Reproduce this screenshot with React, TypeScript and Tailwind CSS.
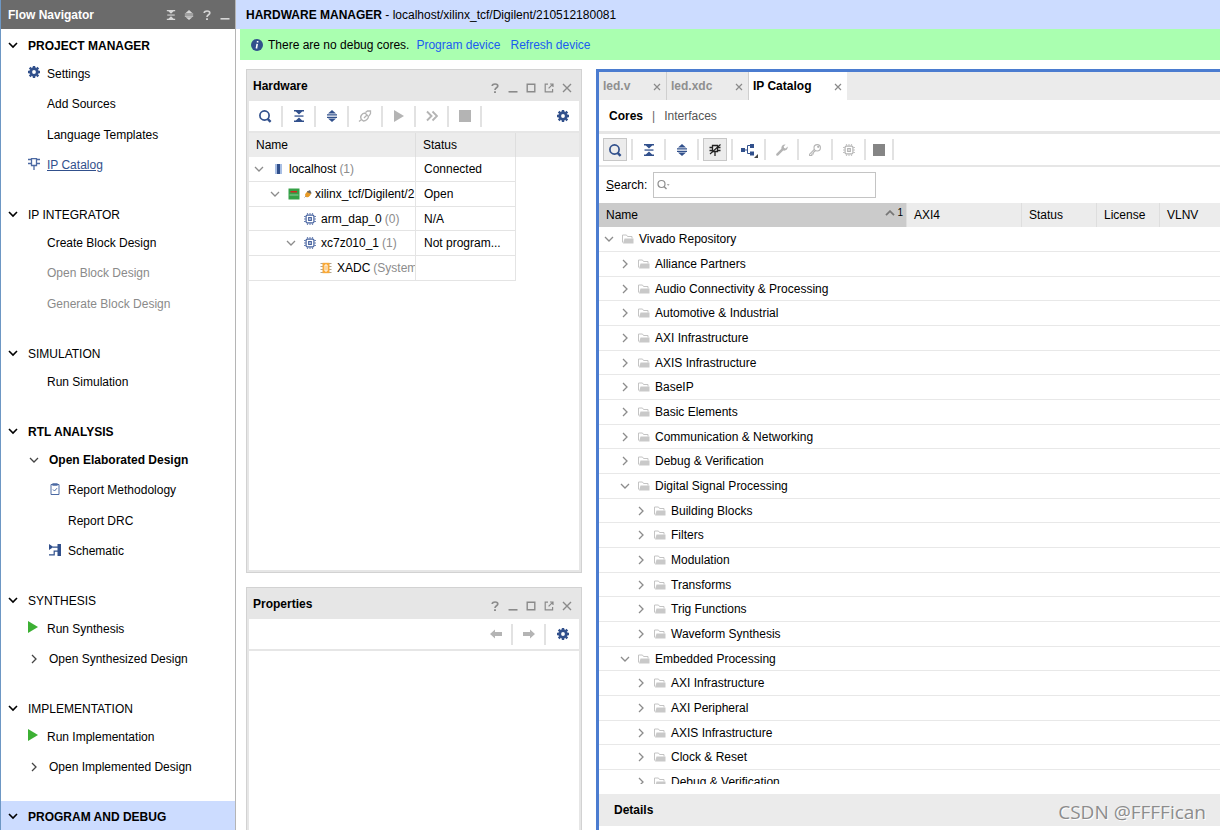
import React, { useState } from 'react';

type NodeIcon = 'folder' | 'server' | 'board' | 'chip' | 'xadc';

interface TreeNode {
  name: string;
  depth: number;
  open?: boolean;
  icon: NodeIcon;
  note?: string;
  status?: string;
}

interface NavItem {
  label: string;
  icon?: React.ReactNode;
  level?: 1 | 2;
  open?: boolean;
  bold?: boolean;
  disabled?: boolean;
  link?: boolean;
}

interface NavSection {
  title: string;
  bold?: boolean;
  active?: boolean;
  items: NavItem[];
}

/* ---------- icons ---------- */

const ChevronDown = ({ className = 'stroke-[1.3]' }: { className?: string }) => (
  <svg viewBox="0 0 10 10" className={`h-[10px] w-[10px] shrink-0 ${className}`} fill="none" stroke="currentColor">
    <path d="M1 3l4 4 4-4" />
  </svg>
);

const ChevronRight = () => (
  <svg viewBox="0 0 10 10" className="h-[10px] w-[10px] shrink-0 stroke-[1.3]" fill="none" stroke="currentColor">
    <path d="M3 1l4 4-4 4" />
  </svg>
);

const GearIcon = () => (
  <svg viewBox="0 0 12 12" className="h-3 w-3 shrink-0" fill="none" stroke="#31508c">
    <circle cx="6" cy="6" r="3.3" strokeWidth="2.8" />
    <path
      d="M6 0v2M6 10v2M0 6h2M10 6h2M1.7 1.7l1.4 1.4M8.9 8.9l1.4 1.4M10.3 1.7L8.9 3.1M3.1 8.9l-1.4 1.4"
      strokeWidth="2.4"
    />
  </svg>
);

const SearchIcon = () => (
  <svg viewBox="0 0 14 14" className="h-[14px] w-[14px]" fill="none" stroke="#31508c">
    <circle cx="6.5" cy="6.5" r="4.6" strokeWidth="1.7" />
    <path d="M9.6 9.8l3 3" strokeWidth="2.4" />
  </svg>
);

const CollapseIcon = ({ small = false }: { small?: boolean }) => (
  <svg viewBox="0 0 12 12" className={small ? 'h-[10px] w-[10px]' : 'h-3 w-3'} fill="currentColor">
    <path d="M1 0h10v1.4H9.200L6 4.400 2.800 1.400H1z" />
    <path d="M1.500 5.400h9v1.300h-9z" />
    <path d="M6 7.600l3.200 2.800H11V12H1v-1.600h1.800z" />
  </svg>
);

const ExpandIcon = ({ small = false }: { small?: boolean }) => (
  <svg viewBox="0 0 12 12" className={small ? 'h-[10px] w-[10px]' : 'h-3 w-3'} fill="currentColor">
    <path d="M6 0l4 3.600H2z" />
    <path d="M1 4.200h10v1.300H1zM1 6.700h10V8H1z" />
    <path d="M2 8.600h8L6 12z" />
  </svg>
);

const HelpIcon = () => (
  <svg viewBox="0 0 10 10" className="h-[10px] w-[10px]" fill="none" stroke="currentColor">
    <path d="M2.200 3C2.200.3 7.800.3 7.800 3 7.800 4.800 5 4.800 5 7" strokeWidth="1.7" />
    <path d="M5 8.2V10" strokeWidth="1.9" />
  </svg>
);

const MinimizeIcon = () => (
  <svg viewBox="0 0 10 10" className="h-[10px] w-[10px]" fill="currentColor">
    <path d="M.5 8h9v1.6h-9z" />
  </svg>
);

const MaximizeIcon = () => (
  <svg viewBox="0 0 10 10" className="h-[10px] w-[10px]" fill="none" stroke="currentColor">
    <path d="M1.2 1.2h7.6v7.6H1.2z" strokeWidth="1.4" />
  </svg>
);

const FloatIcon = () => (
  <svg viewBox="0 0 10 10" className="h-[10px] w-[10px]" fill="none" stroke="currentColor">
    <path d="M4 1.2H1.2v7.6h7.4V6M4.6 5.4l4-4M6 1h3v3" strokeWidth="1.2" />
  </svg>
);

const CloseIcon = () => (
  <svg viewBox="0 0 10 10" className="h-[10px] w-[10px]" fill="none" stroke="currentColor">
    <path d="M1 1l8 8M9 1L1 9" strokeWidth="1.4" />
  </svg>
);

const PlugIcon = () => (
  <svg viewBox="0 0 14 14" className="h-[14px] w-[14px]" fill="none" stroke="#b4b4b4" strokeWidth="1.3">
    <path d="M1 12.500l2.500-2M3.500 10.500c-1.500-2-.5-4.500 1.500-6l2-.5 3.500 3.500c0 2-2.500 4.500-5 4.500z" />
    <path d="M7.500 3.500L9.500 2h3v2.500L11 7M6 9l3-3" />
  </svg>
);

const PlayIcon = ({ className }: { className: string }) => (
  <svg viewBox="0 0 10 12" className={className} fill="currentColor">
    <path d="M0 0l10 6-10 6z" />
  </svg>
);

const FastIcon = () => (
  <svg viewBox="0 0 12 12" className="h-3 w-3" fill="none" stroke="#b4b4b4" strokeWidth="1.9">
    <path d="M1 1.500L5.500 6 1 10.500M6.500 1.500L11 6 6.500 10.500" />
  </svg>
);

const ArrowIcon = ({ flip = false }: { flip?: boolean }) => (
  <svg viewBox="0 0 12 10" className={`h-[10px] w-3 ${flip ? 'rotate-180' : ''}`} fill="#b4b4b4">
    <path d="M0 5l5-4.500v2.500h7v4H5v2.500z" />
  </svg>
);

const CatalogIcon = () => (
  <svg viewBox="0 0 12 12" className="h-3 w-3 shrink-0" fill="none" stroke="#4c6aa3">
    <path d="M3.500.500h5v7h-5zM0 1.500h3.500M0 5.500h3.500M8.500 1.500H12M8.500 5.500H12M6 7.500V12" strokeWidth="1.3" />
  </svg>
);

const ReportIcon = () => (
  <svg viewBox="0 0 12 12" className="h-3 w-3 shrink-0" fill="none" stroke="#4c6aa3">
    <path d="M2 1.500h8v10H2z" />
    <path d="M4 .8h4v1.400H4z" strokeWidth="1.200" />
    <path d="M4 6.500L5.500 8 8 5.200" />
  </svg>
);

const SchematicIcon = () => (
  <svg viewBox="0 0 12 12" className="h-3 w-3 shrink-0" fill="#31508c">
    <path d="M0 0l4.500 3L0 6zM4 2.500h5v1.200H4zM8.500 0H12v12H8.500zM4.600 6.500h4v1.200H5.800v3.800H0v-1.200h4.600z" />
  </svg>
);

const FilterIcon = () => (
  <svg viewBox="0 0 14 14" className="h-[14px] w-[14px]" fill="none" stroke="#222">
    <path d="M4.500 2.500h5v6h-5zM1.500 4.500h3M1.500 7.500h3M9.500 4.500h3M9.500 7.500h3M7 8.500V13" strokeWidth="1.3" />
    <path d="M2 11L12.500 1.500" strokeWidth="1.1" />
  </svg>
);

const HierarchyIcon = () => (
  <svg viewBox="0 0 18 16" className="h-4 w-[18px]" fill="#31508c">
    <path d="M1 6h4v4H1zM10 2h4v4h-4zM10 9.500h4v4h-4z" />
    <path d="M5 8h2M10 3.500H7.500v8H10" fill="none" stroke="#31508c" />
    <path d="M18 12v4h-4z" fill="#444" />
  </svg>
);

const WrenchIcon = () => (
  <svg viewBox="0 0 12 12" className="h-3 w-3" fill="#b4b4b4">
    <path d="M.4 9.800l5-5C4.900 2.300 7 0 9.600.5L7.700 2.400l.4 1.600 1.600.4 1.900-1.900C12.300 5.200 9.600 7.300 7.200 6.600l-5 5c-1.200.9-2.700-.6-1.800-1.800z" />
  </svg>
);

const KeyIcon = () => (
  <svg viewBox="0 0 12 12" className="h-3 w-3" fill="none" stroke="#b4b4b4" strokeWidth="1.100">
    <circle cx="8.200" cy="3.800" r="3.200" />
    <circle cx="9.200" cy="2.800" r=".6" />
    <path d="M5.600 5.200L.6 10.200v1.300h2.200V10h1.400V8.500l2.200-1.800" />
  </svg>
);

const ChipIcon = ({ color = '#4763a0' }: { color?: string }) => (
  <svg viewBox="0 0 12 12" className="h-3 w-3 shrink-0" fill="none" stroke={color}>
    <rect x="2.100" y="2.100" width="7.800" height="7.800" rx="1.200" strokeWidth="1.200" />
    <path d="M4.700 4.700h2.600v2.600H4.700z" strokeWidth="1.200" />
    <path d="M3.500 .2v1.400M6 .2v1.400M8.500 .2v1.400M3.500 10.400v1.400M6 10.400v1.400M8.500 10.400v1.400M.2 3.500h1.400M.2 6h1.400M.2 8.500h1.400M10.400 3.500h1.400M10.400 6h1.400M10.400 8.500h1.400" strokeWidth="1.200" />
  </svg>
);

const StopIcon = ({ dark = false }: { dark?: boolean }) => (
  <svg viewBox="0 0 12 12" className="h-3 w-3" fill={dark ? '#858585' : '#b4b4b4'}>
    <path d="M0 0h12v12H0z" />
  </svg>
);

const FolderIcon = () => (
  <svg viewBox="0 0 12 12" className="h-3 w-3 shrink-0">
    <path d="M.500 9.500V2h4l1 1.500h4.500V5.500" fill="none" stroke="#c4c4c4" />
    <path d="M2.500 5.500h9v5H1z" fill="#c9c9c9" />
  </svg>
);

const ServerIcon = () => (
  <svg viewBox="0 0 12 12" className="h-3 w-3 shrink-0">
    <path d="M3 1h7v10H3z" fill="#a9bfe4" />
    <path d="M5 1h3v10H5z" fill="#31508c" />
  </svg>
);

const BoardIcon = () => (
  <svg viewBox="0 0 12 12" className="h-3 w-3 shrink-0">
    <path d="M.500.500H11.500v11H.500z" fill="#35a046" />
    <path d="M2.500 3h6.500v1.500H2.500z" fill="#d0281f" />
    <path d="M1.500 6.500h9v1h-9z" fill="#8ed19a" />
  </svg>
);

const ConnectorIcon = () => (
  <svg viewBox="0 0 8 8" className="h-2 w-2 shrink-0">
    <ellipse cx="4" cy="4.200" rx="3.300" ry="2.400" transform="rotate(-50 4 4.200)" fill="#e89b25" />
    <path d="M3 1.800l3-1.300 1.200 2.800-1.600-.4zM.5 7.500L2 6" fill="#666" stroke="#666" strokeWidth=".6" />
  </svg>
);

const XadcIcon = () => (
  <svg viewBox="0 0 12 12" className="h-3 w-3 shrink-0" fill="none">
    <path d="M.500 1.500h11M.500 4.500h11M.500 7.500h11M.500 10.500h11" stroke="#b0a590" />
    <path d="M2.500.800h7v10.400h-7z" fill="#f9a938" />
    <path d="M5 3h2v6H5z" stroke="#fff" />
  </svg>
);

const InfoIcon = () => (
  <svg viewBox="0 0 12 12" className="h-3 w-3 shrink-0">
    <circle cx="6" cy="6" r="6" fill="#31508c" />
    <path d="M6.600 2v1.600M6.200 4.800L5.400 9.500" stroke="#fff" strokeWidth="1.600" />
  </svg>
);

/* ---------- data ---------- */

const sections: NavSection[] = [
  {
    title: 'PROJECT MANAGER',
    bold: true,
    items: [
      { label: 'Settings', icon: <GearIcon /> },
      { label: 'Add Sources' },
      { label: 'Language Templates' },
      { label: 'IP Catalog', icon: <CatalogIcon />, link: true }
    ]
  },
  {
    title: 'IP INTEGRATOR',
    items: [
      { label: 'Create Block Design' },
      { label: 'Open Block Design', disabled: true },
      { label: 'Generate Block Design', disabled: true }
    ]
  },
  { title: 'SIMULATION', items: [{ label: 'Run Simulation' }] },
  {
    title: 'RTL ANALYSIS',
    bold: true,
    items: [
      { label: 'Open Elaborated Design', level: 1, open: true, bold: true },
      { label: 'Report Methodology', level: 2, icon: <ReportIcon /> },
      { label: 'Report DRC', level: 2 },
      { label: 'Schematic', level: 2, icon: <SchematicIcon /> }
    ]
  },
  {
    title: 'SYNTHESIS',
    items: [
      { label: 'Run Synthesis', icon: <PlayIcon className="h-3 w-[10px] text-[#3cb034]" /> },
      { label: 'Open Synthesized Design', level: 1 }
    ]
  },
  {
    title: 'IMPLEMENTATION',
    items: [
      { label: 'Run Implementation', icon: <PlayIcon className="h-3 w-[10px] text-[#3cb034]" /> },
      { label: 'Open Implemented Design', level: 1 }
    ]
  },
  { title: 'PROGRAM AND DEBUG', bold: true, active: true, items: [] }
];

const hardware: TreeNode[] = [
  { name: 'localhost', note: '(1)', depth: 0, open: true, icon: 'server', status: 'Connected' },
  { name: 'xilinx_tcf/Digilent/2', depth: 1, open: true, icon: 'board', status: 'Open' },
  { name: 'arm_dap_0', note: '(0)', depth: 2, icon: 'chip', status: 'N/A' },
  { name: 'xc7z010_1', note: '(1)', depth: 2, open: true, icon: 'chip', status: 'Not program...' },
  { name: 'XADC', note: '(System', depth: 3, icon: 'xadc', status: '' }
];

const folder = (name: string, depth: number, open = false): TreeNode => ({ name, depth, open, icon: 'folder' });

const catalog: TreeNode[] = [
  folder('Vivado Repository', 0, true),
  folder('Alliance Partners', 1),
  folder('Audio Connectivity & Processing', 1),
  folder('Automotive & Industrial', 1),
  folder('AXI Infrastructure', 1),
  folder('AXIS Infrastructure', 1),
  folder('BaseIP', 1),
  folder('Basic Elements', 1),
  folder('Communication & Networking', 1),
  folder('Debug & Verification', 1),
  folder('Digital Signal Processing', 1, true),
  folder('Building Blocks', 2),
  folder('Filters', 2),
  folder('Modulation', 2),
  folder('Transforms', 2),
  folder('Trig Functions', 2),
  folder('Waveform Synthesis', 2),
  folder('Embedded Processing', 1, true),
  folder('AXI Infrastructure', 2),
  folder('AXI Peripheral', 2),
  folder('AXIS Infrastructure', 2),
  folder('Clock & Reset', 2),
  folder('Debug & Verification', 2)
];

const indents = ['pl-[5px]', 'pl-[21px]', 'pl-[37px]', 'pl-[53px]'];

const nodeIcons: Record<NodeIcon, React.ReactNode> = {
  folder: <FolderIcon />,
  server: <ServerIcon />,
  board: <BoardIcon />,
  chip: <ChipIcon />,
  xadc: <XadcIcon />
};

/* ---------- shared parts ---------- */

const TreeLabel = ({ node }: { node: TreeNode }) => (
  <div className={`flex items-center overflow-hidden whitespace-nowrap ${indents[node.depth]}`}>
    <span className="mr-2 flex w-[10px] shrink-0 text-[#8c8c8c]">
      {node.open && <ChevronDown />}
      {node.open === false && <ChevronRight />}
    </span>
    {nodeIcons[node.icon]}
    {node.icon === 'board' && (
      <span className="-mr-0.5 ml-1">
        <ConnectorIcon />
      </span>
    )}
    <span className="ml-[5px]">{node.name}</span>
    {node.note && <span className="ml-[3px] text-[#8c8c8c]">{node.note}</span>}
  </div>
);

interface ToolButtonProps {
  label: string;
  className?: string;
  pressed?: boolean;
  disabled?: boolean;
  children: React.ReactNode;
}

const ToolButton = ({ label, className = '', pressed = false, disabled = false, children }: ToolButtonProps) => (
  <div className={`flex h-[21px] shrink-0 items-center justify-center border-[#e2e2e2] text-[#31508c] ${className}`}>
    <button
      type="button"
      aria-label={label}
      disabled={disabled}
      className={`flex h-[23px] w-6 shrink-0 items-center justify-center ${
        pressed ? 'border border-[#c8c8c8] bg-[#ececec]' : ''
      }`}
    >
      {children}
    </button>
  </div>
);

const PanelHeader = ({ title }: { title: string }) => (
  <div className="flex h-[31px] items-center justify-between pr-[3px] pl-1">
    <h2 className="font-bold">{title}</h2>
    <div className="flex pt-1 text-[#8a8a8a]">
      {[
        { label: 'Help', icon: <HelpIcon /> },
        { label: 'Minimize', icon: <MinimizeIcon /> },
        { label: 'Maximize', icon: <MaximizeIcon /> },
        { label: 'Float', icon: <FloatIcon /> },
        { label: 'Close', icon: <CloseIcon /> }
      ].map((action) => (
        <button key={action.label} type="button" aria-label={action.label} className="flex w-[18px] justify-center">
          {action.icon}
        </button>
      ))}
    </div>
  </div>
);

/* ---------- panels ---------- */

const NavRow = ({ item }: { item: NavItem }) => {
  const indent = item.level === 2 ? 'pl-12' : item.level === 1 ? 'pl-7' : 'pl-[27px]';
  const color = item.disabled ? 'text-[#8a8a8a]' : 'text-black';
  return (
    <li className={`flex h-[31px] items-center even:h-[30px] ${indent}`}>
      <span className={`flex shrink-0 ${item.level === 1 ? 'mr-[10px] w-[10px] text-[#444]' : 'mr-[7px] w-3 pb-[3px]'}`}>
        {item.level === 1 ? item.open ? <ChevronDown /> : <ChevronRight /> : item.icon}
      </span>
      {item.link ? (
        <a href="#ip-catalog" className="text-[#31508c] underline">
          {item.label}
        </a>
      ) : (
        <button type="button" disabled={item.disabled} className={`${color} ${item.bold ? 'font-bold' : ''}`}>
          {item.label}
        </button>
      )}
    </li>
  );
};

const FlowNavigator = () => (
  <nav className="flex w-[236px] shrink-0 flex-col border-r border-l border-r-[#b5b5b5] border-l-[#6d97c4] bg-white">
    <div className="flex h-[29px] shrink-0 items-center justify-between bg-[#6b6b6b] pr-px pl-[7px] text-[#d6d6d6]">
      <h1 className="font-bold text-white">Flow Navigator</h1>
      <div className="flex items-center">
        {[
          { label: 'Collapse all', icon: <CollapseIcon small /> },
          { label: 'Expand all', icon: <ExpandIcon small /> },
          { label: 'Help', icon: <HelpIcon /> },
          { label: 'Minimize', icon: <MinimizeIcon /> }
        ].map((action) => (
          <button key={action.label} type="button" aria-label={action.label} className="flex w-[18px] justify-center">
            {action.icon}
          </button>
        ))}
      </div>
    </div>
    <div className="flex flex-1 flex-col gap-[19px] pt-px">
      {sections.map((section) => (
        <section key={section.title} className={section.active ? 'flex-1 bg-[#ccdcff]' : ''}>
          <button
            type="button"
            className={`flex h-7 w-full items-start gap-[10px] pt-[7px] pl-[7px] ${section.bold ? 'font-bold' : ''}`}
          >
            <ChevronDown className="mt-[3px] stroke-[1.6]" />
            {section.title}
          </button>
          <ul>
            {section.items.map((item) => (
              <NavRow key={item.label} item={item} />
            ))}
          </ul>
        </section>
      ))}
    </div>
  </nav>
);

const hwCell = 'w-[33px] border-r-2 nth-[3n+1]:w-[34px]';

const HardwarePanel = () => (
  <section className="flex flex-col border border-[#d2d2d2] bg-[#e6e6e6] px-0.5 pb-0.5">
    <PanelHeader title="Hardware" />
    <div className="flex flex-1 flex-col bg-white">
      <div className="flex h-8 shrink-0 items-center border-b-2 border-[#e6e6e6]">
        <ToolButton label="Search" className={hwCell}><SearchIcon /></ToolButton>
        <ToolButton label="Collapse all" className={hwCell}><CollapseIcon /></ToolButton>
        <ToolButton label="Expand all" className={hwCell}><ExpandIcon /></ToolButton>
        <ToolButton label="Auto connect" className={hwCell} disabled><PlugIcon /></ToolButton>
        <ToolButton label="Run trigger" className={hwCell} disabled>
          <PlayIcon className="h-3 w-[10px] text-[#b4b4b4]" />
        </ToolButton>
        <ToolButton label="Run trigger immediate" className={hwCell} disabled><FastIcon /></ToolButton>
        <ToolButton label="Stop trigger" className="w-[33px] border-r-2" disabled><StopIcon /></ToolButton>
        <ToolButton label="Hardware settings" className="ml-auto w-[33px]"><GearIcon /></ToolButton>
      </div>
      <table className="w-full table-fixed border-separate border-spacing-0 text-left">
        <colgroup>
          <col className="w-[167px]" />
          <col className="w-[100px]" />
          <col />
        </colgroup>
        <thead>
          <tr className="h-6 bg-[#ececec]">
            <th className="border-r border-[#dedede] pl-[7px] font-normal">Name</th>
            <th className="border-r border-[#dedede] pl-[7px] font-normal">Status</th>
            <td />
          </tr>
        </thead>
        <tbody>
          {hardware.map((node) => (
            <tr key={node.name} className="h-[25px] nth-[3n]:h-[24px]">
              <td className="border-r border-b border-[#e4e4e4] p-0">
                <TreeLabel node={node} />
              </td>
              <td className="border-r border-b border-[#e4e4e4] py-0 pr-0 pl-2 whitespace-nowrap">{node.status}</td>
              <td />
            </tr>
          ))}
        </tbody>
      </table>
    </div>
  </section>
);

const PropertiesPanel = () => (
  <section className="flex flex-col border border-[#d2d2d2] bg-[#e6e6e6] px-0.5 pb-0.5">
    <PanelHeader title="Properties" />
    <div className="flex-1 bg-white">
      <div className="flex h-8 items-center justify-end border-b-2 border-[#e6e6e6]">
        <ToolButton label="Previous object" className="w-[33px] border-r-2" disabled><ArrowIcon /></ToolButton>
        <ToolButton label="Next object" className="w-[33px] border-r-2" disabled><ArrowIcon flip /></ToolButton>
        <ToolButton label="Properties settings" className="w-[33px]"><GearIcon /></ToolButton>
      </div>
    </div>
  </section>
);

const tabs = [
  { name: 'led.v', width: 'w-[68px] border-r' },
  { name: 'led.xdc', width: 'w-[82px] border-r' },
  { name: 'IP Catalog', width: 'w-[98px]' }
];

const ipCell = 'w-[33px] border-r-2 nth-[3n+1]:w-[34px]';

const CatalogPanel = () => {
  const [activeTab, setActiveTab] = useState('IP Catalog');
  const [query, setQuery] = useState('');

  return (
    <section className="flex min-w-0 flex-1 flex-col border-t-[3px] border-l-[3px] border-[#4b7cd0] bg-white">
      <div className="flex h-7 shrink-0 bg-[#ebebeb]">
        {tabs.map((tab) => {
          const active = tab.name === activeTab;
          return (
            <div
              key={tab.name}
              className={`flex items-center justify-between border-[#cfcfcf] pr-[5px] pl-1 ${tab.width} ${
                active ? 'bg-white text-black' : 'text-[#8f8f8f]'
              }`}
            >
              <button type="button" className="font-bold" onClick={() => setActiveTab(tab.name)}>
                {tab.name}
              </button>
              <button type="button" aria-label={`Close ${tab.name}`} className="pt-0.5 text-[#8a8a8a]">
                <svg viewBox="0 0 8 8" className="h-2 w-2" fill="none" stroke="currentColor">
                  <path d="M1 1l6 6M7 1L1 7" strokeWidth="1.2" />
                </svg>
              </button>
            </div>
          );
        })}
      </div>
      <div className="flex h-[34px] shrink-0 items-center gap-[9px] border-b-[3px] border-[#e6e6e6] pl-[10px]">
        <button type="button" className="font-bold">Cores</button>
        <span className="text-[#666]">|</span>
        <button type="button" className="text-[#555]">Interfaces</button>
      </div>
      <div className="flex h-[33px] shrink-0 items-center border-b-2 border-[#e6e6e6]">
        <ToolButton label="Search" className={ipCell} pressed><SearchIcon /></ToolButton>
        <ToolButton label="Collapse all" className={ipCell}><CollapseIcon /></ToolButton>
        <ToolButton label="Expand all" className={ipCell}><ExpandIcon /></ToolButton>
        <ToolButton label="Hide incompatible IP" className={ipCell} pressed><FilterIcon /></ToolButton>
        <ToolButton label="Group by" className={ipCell}><HierarchyIcon /></ToolButton>
        <ToolButton label="Customize IP" className={ipCell} disabled><WrenchIcon /></ToolButton>
        <ToolButton label="License status" className={ipCell} disabled><KeyIcon /></ToolButton>
        <ToolButton label="Compatible families" className={ipCell} disabled><ChipIcon color="#b4b4b4" /></ToolButton>
        <ToolButton label="Product information" className="w-7 border-r-2" disabled><StopIcon dark /></ToolButton>
      </div>
      <div className="flex h-9 shrink-0 items-center pl-[7px]">
        <label htmlFor="ip-search" className="w-[47px]">
          <span className="underline">S</span>earch:
        </label>
        <div className="relative">
          <svg
            viewBox="0 0 14 12"
            className="absolute top-[7px] left-1 h-3 w-[14px]"
            fill="none"
            stroke="#8f8f8f"
          >
            <circle cx="4.500" cy="5" r="3.500" strokeWidth="1.2" />
            <path d="M7 7.500l2.500 2.500" strokeWidth="1.400" />
            <path d="M9.800 5.300h2.800l-1.400 1.500z" fill="#8f8f8f" stroke="none" />
          </svg>
          <input
            id="ip-search"
            type="text"
            value={query}
            onChange={(e) => setQuery(e.target.value)}
            className="block h-[26px] w-[223px] border border-[#c4c4c4] bg-white pr-1 pl-5 outline-none"
          />
        </div>
      </div>
      <div className="mb-[10px] min-h-0 flex-1 overflow-hidden">
        <table className="w-full table-fixed border-separate border-spacing-0 text-left">
          <colgroup>
            <col className="w-[308px]" />
            <col className="w-[115px]" />
            <col className="w-[75px]" />
            <col className="w-[63px]" />
            <col />
          </colgroup>
          <thead>
            <tr className="h-6 bg-[#ececec]">
              <th className="border-r border-[#dedede] bg-[#cbcbcb] py-0 pr-[3px] pl-[7px] font-normal">
                <div className="flex items-center justify-between">
                  Name
                  <span className="flex items-center gap-0.5 pb-1 text-[10px] leading-3">
                    <svg viewBox="0 0 10 6" className="h-[6px] w-[10px]" fill="none" stroke="#777" strokeWidth="1.800">
                      <path d="M1 5.200l4-4 4 4" />
                    </svg>
                    1
                  </span>
                </div>
              </th>
              <th className="border-r border-[#dedede] py-0 pl-[7px] font-normal">AXI4</th>
              <th className="border-r border-[#dedede] py-0 pl-[7px] font-normal">Status</th>
              <th className="border-r border-[#dedede] py-0 pl-[7px] font-normal">License</th>
              <th className="py-0 pl-[7px] font-normal">VLNV</th>
            </tr>
          </thead>
          <tbody>
            {catalog.map((node, i) => (
              <tr key={i} className="h-[25px] nth-[3n]:h-[24px]">
                <td colSpan={5} className="border-b border-[#e8e8e8] p-0">
                  <TreeLabel node={node} />
                </td>
              </tr>
            ))}
          </tbody>
        </table>
      </div>
      <div className="mb-1 flex h-8 shrink-0 items-center bg-[#ebebeb] pl-[15px]">
        <h2 className="font-bold">Details</h2>
      </div>
    </section>
  );
};

const App: React.FC = () => {
  return (
    <div className="relative flex h-screen overflow-hidden bg-white font-['Liberation_Sans',Arial,sans-serif] text-[12px] leading-[18px] text-black">
      <FlowNavigator />
      <main className="flex min-w-0 flex-1 flex-col">
        <header className="flex h-[29px] shrink-0 items-center bg-[#ccdcff] pl-[10px] whitespace-pre">
          <b>HARDWARE MANAGER</b> - localhost/xilinx_tcf/Digilent/210512180081
        </header>
        <div className="ml-1 flex h-[31px] shrink-0 items-center bg-[#aaffb0] pl-[11px]">
          <InfoIcon />
          <span className="ml-[5px]">There are no debug cores.</span>
          <a href="#program" className="ml-[7px] text-[#1a5cf0]">Program device</a>
          <a href="#refresh" className="ml-[10px] text-[#1a5cf0]">Refresh device</a>
        </div>
        <div className="flex min-h-0 flex-1 gap-[14px] pt-[9px] pl-[10px]">
          <div className="-mb-[9px] grid w-[336px] shrink-0 grid-rows-[2fr_1fr] gap-[14px]">
            <HardwarePanel />
            <PropertiesPanel />
          </div>
          <CatalogPanel />
        </div>
      </main>
      <div className="pointer-events-none absolute right-[14px] bottom-1 font-['Open_Sans','Noto_Sans',sans-serif] text-[19px] leading-7 text-[#8c8c8c] [text-shadow:1px_1px_0_#fff]">
        CSDN @FFFFican
      </div>
    </div>
  );
};

export default App;
